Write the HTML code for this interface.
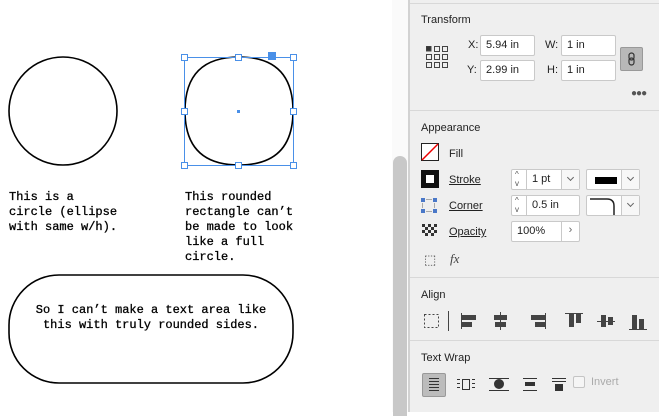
<!DOCTYPE html>
<html><head><style>
*{margin:0;padding:0;box-sizing:border-box}
body{width:659px;height:412px;overflow:hidden;background:#fff;position:relative;font-family:"Liberation Sans",sans-serif}
.mono{position:absolute;font-family:"Liberation Mono",monospace;font-size:12px;line-height:15px;color:#000;white-space:pre;-webkit-text-stroke:0.3px #000}
.panel{position:absolute;left:408px;top:0;width:251px;height:412px;background:#efefef;border-left:2px solid #d2d2d2}
.sec{position:absolute;left:0;width:251px;border-top:1px solid #d8d8d8}
.h{position:absolute;font-size:11px;color:#222}
.inp{position:absolute;height:21px;background:#fff;border:1px solid #c9c9c9;border-radius:2px;font-size:11px;color:#222;padding:3px 0 0 5px}
.lbl{position:absolute;font-size:11px;color:#222}
.u{text-decoration:underline}
.chev{position:absolute;top:0;right:0;width:18px;height:19px;border-left:1px solid #c9c9c9;background:#f7f7f7}
.chev::after{content:"";position:absolute;left:6px;top:5px;width:4px;height:4px;border-right:1px solid #666;border-bottom:1px solid #666;transform:rotate(45deg)}
</style></head><body>
<svg width="392" height="412" style="position:absolute;left:0;top:0">
<circle cx="63" cy="111" r="54" fill="none" stroke="#000" stroke-width="1.6"/>
<path d="M239 57C275 57 293 75 293 111C293 147 275 165 239 165C203 165 185 147 185 111C185 75 203 57 239 57Z" fill="none" stroke="#000" stroke-width="1.6"/>
<rect x="184.5" y="57.5" width="109" height="108" fill="none" stroke="#4a90e8" stroke-width="1"/>
<g fill="#fff" stroke="#4a90e8" stroke-width="1">
<rect x="181.5" y="54.5" width="6" height="6"/><rect x="235.5" y="54.5" width="6" height="6"/><rect x="290.5" y="54.5" width="6" height="6"/>
<rect x="181.5" y="108.5" width="6" height="6"/><rect x="290.5" y="108.5" width="6" height="6"/>
<rect x="181.5" y="162.5" width="6" height="6"/><rect x="235.5" y="162.5" width="6" height="6"/><rect x="290.5" y="162.5" width="6" height="6"/>
</g>
<rect x="268" y="52" width="8" height="8" fill="#4a90e8"/>
<rect x="237" y="110" width="3" height="3" fill="#4a90e8"/>
<rect x="9" y="275" width="284" height="108" rx="50" fill="none" stroke="#000" stroke-width="1.6"/>
</svg>
<div class="mono" style="left:9px;top:190px">This is a
circle (ellipse
with same w/h).</div>
<div class="mono" style="left:185px;top:190px">This rounded
rectangle can’t
be made to look
like a full
circle.</div>
<div class="mono" style="left:9px;top:303px;width:284px;text-align:center">So I can’t make a text area like
this with truly rounded sides.</div>
<div style="position:absolute;left:392px;top:0;width:16px;height:412px;background:#fafafa"></div>
<div style="position:absolute;left:393px;top:156px;width:14px;height:260px;background:#c8c8c8;border-radius:7px 7px 0 0"></div>
<div class="panel">
<div class="sec" style="top:3px"></div>
<div class="h" style="left:11px;top:14px">Transform</div>
<svg style="position:absolute;left:16px;top:46px" width="26" height="26" fill="none" stroke="#444" stroke-width="1">
<rect x="0" y="0" width="5" height="5" fill="#333"/><rect x="8.5" y=".5" width="5" height="5"/><rect x="16.5" y=".5" width="5" height="5"/>
<rect x=".5" y="8.5" width="5" height="5"/><rect x="8.5" y="8.5" width="5" height="5"/><rect x="16.5" y="8.5" width="5" height="5"/>
<rect x=".5" y="16.5" width="5" height="5"/><rect x="8.5" y="16.5" width="5" height="5"/><rect x="16.5" y="16.5" width="5" height="5"/>
</svg>
<div class="lbl" style="left:58px;top:39px">X:</div>
<div class="inp" style="left:70px;top:35px;width:55px">5.94 in</div>
<div class="lbl" style="left:57px;top:64px">Y:</div>
<div class="inp" style="left:70px;top:60px;width:55px">2.99 in</div>
<div class="lbl" style="left:135px;top:39px">W:</div>
<div class="inp" style="left:151px;top:35px;width:55px">1 in</div>
<div class="lbl" style="left:137px;top:64px">H:</div>
<div class="inp" style="left:151px;top:60px;width:55px">1 in</div>
<div style="position:absolute;left:210px;top:47px;width:23px;height:24px;background:#b8b8b8;border:1px solid #999;border-radius:2px">
<svg width="21" height="22"><rect x="8" y="5" width="5" height="7" rx="2.5" fill="none" stroke="#333" stroke-width="1.2"/><rect x="8" y="10" width="5" height="7" rx="2.5" fill="none" stroke="#333" stroke-width="1.2"/></svg></div>
<div style="position:absolute;left:221px;top:88px;font-size:10px;color:#555;letter-spacing:-1px">●●●</div>
<div class="sec" style="top:110px"></div>
<div class="h" style="left:11px;top:122px">Appearance</div>
<svg style="position:absolute;left:11px;top:143px" width="20" height="110">
<rect x=".5" y=".5" width="17" height="17" fill="#fff" stroke="#222"/><line x1="1" y1="17" x2="17" y2="1" stroke="#e00" stroke-width="1.5"/>
<rect x="0" y="27" width="18" height="18" fill="#111"/><rect x="5" y="32" width="8" height="8" fill="#fff"/>
<g fill="#4a78c8"><rect x="0" y="55" width="4" height="4"/><rect x="12" y="55" width="4" height="4"/><rect x="0" y="66" width="4" height="4"/><rect x="12" y="66" width="4" height="4"/></g>
<g fill="#aaa"><rect x="5" y="56" width="6" height="1"/><rect x="5" y="68" width="6" height="1"/><rect x="1" y="60" width="1" height="5"/><rect x="13" y="60" width="1" height="5"/></g>
<g fill="#333"><rect x="1" y="81" width="3" height="3"/><rect x="7" y="81" width="3" height="3"/><rect x="13" y="81" width="3" height="3"/><rect x="4" y="84" width="3" height="3"/><rect x="10" y="84" width="3" height="3"/><rect x="1" y="87" width="3" height="3"/><rect x="7" y="87" width="3" height="3"/><rect x="13" y="87" width="3" height="3"/><rect x="4" y="90" width="3" height="3"/><rect x="10" y="90" width="3" height="3"/></g>
</svg>
<div class="lbl" style="left:39px;top:148px">Fill</div>
<div class="lbl u" style="left:39px;top:174px">Stroke</div>
<div class="lbl u" style="left:39px;top:200px">Corner</div>
<div class="lbl u" style="left:39px;top:226px">Opacity</div>
<div class="inp" style="left:101px;top:169px;width:69px;padding-left:20px">1 pt<div class="chev"></div><div style="position:absolute;left:0;top:0;width:15px;height:19px;border-right:1px solid #c9c9c9"></div></div>
<div style="position:absolute;left:105px;top:170px;font-size:8px;line-height:9px;color:#555">^<br>v</div>
<div class="inp" style="left:176px;top:169px;width:54px"><div style="width:22px;height:7px;background:#000;margin:4px 0 0 3px"></div><div class="chev"></div></div>
<div class="inp" style="left:101px;top:195px;width:69px;padding-left:20px">0.5 in<div style="position:absolute;left:0;top:0;width:15px;height:19px;border-right:1px solid #c9c9c9"></div></div>
<div style="position:absolute;left:105px;top:196px;font-size:8px;line-height:9px;color:#555">^<br>v</div>
<div class="inp" style="left:176px;top:195px;width:54px;padding:0"><svg width="34" height="19"><path d="M3 3H20Q27 3 27 10V19" fill="none" stroke="#222" stroke-width="1.5"/></svg><div class="chev"></div></div>
<div class="inp" style="left:101px;top:221px;width:69px">100% <div style="position:absolute;right:0;top:0;width:18px;height:19px;border-left:1px solid #c9c9c9;text-align:center;color:#666;line-height:17px">›</div></div>
<div class="lbl" style="left:14px;top:252px;font-size:13px;color:#444">⬚</div>
<div class="lbl" style="left:40px;top:251px;font-style:italic;font-family:'Liberation Serif',serif;font-size:13px;color:#444">fx</div>
<div class="sec" style="top:277px"></div>
<div class="h" style="left:11px;top:289px">Align</div>
<svg style="position:absolute;left:14px;top:310px" width="230" height="24" fill="#444">
<rect x=".5" y="4.5" width="14" height="13" fill="none" stroke="#444" stroke-dasharray="2 2"/>
<rect x="24" y="1" width="1" height="20"/>
<rect x="37" y="3" width="1" height="16"/><rect x="38" y="5" width="14" height="5"/><rect x="38" y="12" width="10" height="5"/>
<rect x="76" y="2" width="1" height="18"/><rect x="70" y="5" width="13" height="5"/><rect x="71" y="12" width="11" height="5"/>
<rect x="121" y="3" width="1" height="16"/><rect x="107" y="5" width="14" height="5"/><rect x="111" y="12" width="10" height="5"/>
<rect x="141" y="3" width="18" height="1"/><rect x="145" y="4" width="5" height="13"/><rect x="152" y="4" width="5" height="9"/>
<rect x="173" y="11" width="18" height="1"/><rect x="177" y="5" width="5" height="12"/><rect x="184" y="7" width="5" height="8"/>
<rect x="205" y="19" width="18" height="1"/><rect x="208" y="5" width="5" height="14"/><rect x="215" y="9" width="5" height="10"/>
</svg>
<div class="sec" style="top:340px"></div>
<div class="h" style="left:11px;top:352px">Text Wrap</div>
<div style="position:absolute;left:12px;top:373px;width:24px;height:24px;background:#bcbcbc;border:1px solid #999;border-radius:2px"></div>
<svg style="position:absolute;left:16px;top:377px" width="150" height="16" fill="#333">
<rect x="3" y="1" width="10" height="1"/><rect x="3" y="4" width="10" height="1"/><rect x="3" y="7" width="10" height="1"/><rect x="3" y="10" width="10" height="1"/><rect x="3" y="13" width="10" height="1"/>
<rect x="36.5" y="2.5" width="7" height="10" fill="none" stroke="#333"/><rect x="31" y="2" width="3" height="1"/><rect x="31" y="6" width="3" height="1"/><rect x="31" y="10" width="3" height="1"/><rect x="46" y="2" width="3" height="1"/><rect x="46" y="6" width="3" height="1"/><rect x="46" y="10" width="3" height="1"/>
<circle cx="73" cy="7" r="5"/><rect x="63" y="1" width="20" height="1"/><rect x="63" y="13" width="20" height="1"/>
<rect x="97" y="1" width="14" height="1"/><rect x="99" y="5" width="10" height="4"/><rect x="97" y="13" width="14" height="1"/>
<rect x="126" y="1" width="14" height="1"/><rect x="126" y="4" width="14" height="1"/><rect x="129" y="7" width="8" height="7"/>
</svg>
<div style="position:absolute;left:163px;top:376px;width:12px;height:12px;border:1px solid #c4c4c4;background:#f5f5f5;border-radius:2px"></div>
<div class="lbl" style="left:181px;top:376px;color:#aaa">Invert</div>
</div>
</body></html>
